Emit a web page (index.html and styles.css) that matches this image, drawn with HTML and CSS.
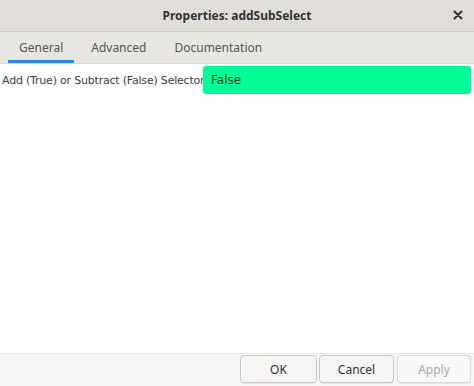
FILE: index.html
```
<!DOCTYPE html>
<html>
<head>
<meta charset="utf-8">
<link rel="stylesheet" href="styles.css">
</head>
<body>
<div class="window">
  <div class="titlebar">
    <span class="title">Properties: addSubSelect</span>
    <span class="close">
      <svg width="10" height="10" viewBox="0 0 10 10"><path d="M1.5 1.5 L8.5 8.5 M8.5 1.5 L1.5 8.5" stroke="#2e3436" stroke-width="2" stroke-linecap="round"/></svg>
    </span>
  </div>
  <div class="tabs">
    <div class="tab active">General</div>
    <div class="tab">Advanced</div>
    <div class="tab">Documentation</div>
  </div>
  <div class="content">
    <div class="row">
      <label class="label">Add (True) or Subtract (False) Selector</label>
      <div class="field">False</div>
    </div>
  </div>
  <div class="buttons">
    <div class="spacer"></div>
    <button class="btn ok">OK</button>
    <button class="btn cancel">Cancel</button>
    <button class="btn disabled">Apply</button>
  </div>
</div>
</body>
</html>
```
FILE: styles.css
```
html, body {
  margin: 0;
  padding: 0;
  width: 474px;
  height: 386px;
  overflow: hidden;
  background: #ffffff;
  font-family: "DejaVu Sans", sans-serif;
}
.window {
  display: flex;
  flex-direction: column;
  width: 474px;
  height: 386px;
}
.titlebar {
  height: 31px;
  background: #e1deda;
  border-bottom: 1px solid #cfcbc6;
  display: flex;
  align-items: center;
  justify-content: center;
  position: relative;
  flex: none;
}
.title {
  font-family: "Noto Sans", sans-serif;
  font-size: 12px;
  font-weight: bold;
  color: #2e3436;
}
.close {
  position: absolute;
  right: 11px;
  top: 10px;
  width: 10px;
  height: 10px;
  display: flex;
}
.tabs {
  height: 32px;
  background: #e8e6e3;
  display: flex;
  padding-left: 8px;
  flex: none;
  box-sizing: border-box;
  border-bottom: 1px solid #dcd9d5;
}
.tab {
  font-family: "Noto Sans", sans-serif;
  font-size: 12px;
  color: #555753;
  padding: 0 11px;
  display: flex;
  align-items: center;
  height: 31px;
  box-sizing: border-box;
  margin-right: 6px;
}
.tab.active {
  border-bottom: 3px solid #3584e4;
  padding-top: 3px;
}
.content {
  flex: 1;
  background: #ffffff;
  padding: 2px 3px 0 2px;
}
.row {
  display: flex;
  align-items: center;
}
.label {
  font-size: 11px;
  color: #3b3e3f;
  width: 201px;
  white-space: nowrap;
  letter-spacing: -0.2px;
  overflow: hidden;
}
.field {
  flex: 1;
  height: 28px;
  background: #00fd97;
  border-radius: 3px;
  display: flex;
  align-items: center;
  padding-left: 8px;
  font-size: 12px;
  color: #173e2a;
}
.buttons {
  height: 31px;
  flex: none;
  background: #f6f5f4;
  border-top: 1px solid #ebe9e6;
  display: flex;
  align-items: flex-start;
  padding: 1px 3px 0 0;
  box-sizing: content-box;
}
.spacer {
  flex: 1;
}
.btn {
  width: 77px;
  height: 28px;
  font-family: "Noto Sans", sans-serif;
  font-size: 12px;
  color: #2e3436;
  background: #f6f5f4;
  border: 1px solid #cdc7c2;
  border-radius: 4px;
  box-shadow: 0 1px 0 rgba(0,0,0,0.05);
  padding: 0;
}
.btn.cancel {
  width: 75px;
  margin-left: 2px;
}
.btn.disabled {
  color: #a8aaa6;
  border-color: #dcd8d4;
  background: #faf9f8;
  width: 74px;
  margin-left: 3px;
}
```
